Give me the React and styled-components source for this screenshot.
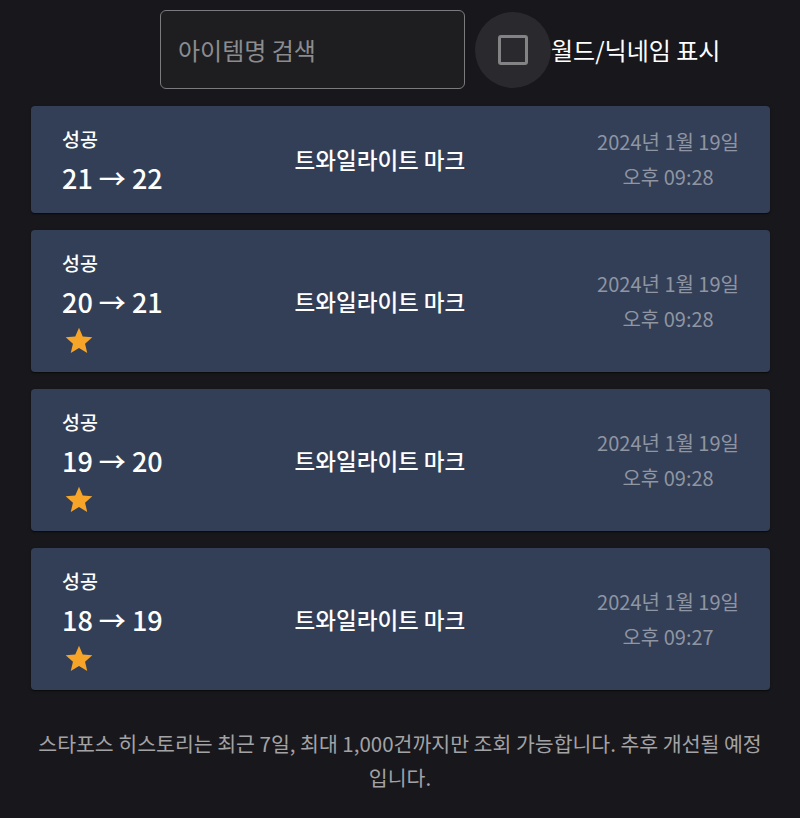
import React from "react";
import styled, { createGlobalStyle } from "styled-components";

const GlobalStyle = createGlobalStyle`
    html, body {
        margin: 0;
        padding: 0;
        background: #18181c;
    }

    body {
        font-family: "Noto Sans CJK KR", "Noto Sans", sans-serif;
        color: #ffffff;
    }
`;

const Page = styled.div`
    width: 800px;
    min-height: 818px;
    background: #18181c;
    padding-top: 10px;
    box-sizing: border-box;
`;

const Toolbar = styled.div`
    display: flex;
    align-items: center;
    height: 79px;
    padding-left: 160px;
`;

const SearchBox = styled.input`
    box-sizing: border-box;
    width: 305px;
    height: 79px;
    padding: 0 17px;
    background: #1e1e21;
    border: 1px solid #7b7b7e;
    border-radius: 6px;
    color: #ffffff;
    font-family: inherit;
    font-size: 24px;
    outline: none;

    &::placeholder {
        color: #8c8c8f;
    }
`;

const ToggleLabel = styled.label`
    display: flex;
    align-items: center;
    margin-left: 10px;
    font-size: 24px;
    font-weight: 400;
    color: #ffffff;
    cursor: pointer;
`;

const Ripple = styled.span`
    display: flex;
    align-items: center;
    justify-content: center;
    width: 76px;
    height: 76px;
    border-radius: 50%;
    background: #2a2a2e;
`;

const Box = styled.span`
    box-sizing: border-box;
    width: 30px;
    height: 30px;
    border: 3px solid #838386;
    border-radius: 3px;
`;

const List = styled.ul`
    list-style: none;
    margin: 17px 30px 0 31px;
    padding: 0;
    display: flex;
    flex-direction: column;
    gap: 17px;
`;

const Card = styled.li`
    display: flex;
    align-items: center;
    justify-content: space-between;
    padding: 14px 31px 15px;
    background: #333f56;
    border-radius: 4px;
    box-shadow: 0 2px 1px -1px rgba(0, 0, 0, 0.3), 0 1px 1px 0 rgba(0, 0, 0, 0.2),
        0 1px 3px 0 rgba(0, 0, 0, 0.18);
`;

const Result = styled.div`
    display: flex;
    flex-direction: column;
`;

const Status = styled.div`
    font-size: 19.5px;
    font-weight: 500;
    line-height: 38px;
`;

const Levels = styled.div`
    font-size: 27px;
    font-weight: 500;
    line-height: 40px;
`;

const StarIcon = styled.svg`
    display: block;
    width: 32px;
    height: 32px;
    margin: 3px 0 0 1px;
    fill: #f6a528;
`;

const ItemName = styled.div`
    font-size: 22.5px;
    font-weight: 500;
    line-height: 30px;
`;

const DateTime = styled.div`
    font-size: 20px;
    line-height: 35px;
    text-align: center;
    color: #8f95a2;
`;

const Notice = styled.p`
    margin: 36px 0 0;
    padding: 0 38px;
    font-size: 20.5px;
    line-height: 34px;
    text-align: center;
    color: #a3a3a6;
`;

const Star = () => (
    <StarIcon viewBox="0 0 24 24">
        <path d="M12 17.27 18.18 21l-1.64-7.03L22 9.24l-7.19-.61L12 2 9.19 8.63 2 9.24l5.46 4.73L5.82 21z" />
    </StarIcon>
);

const history = [
    { from: 21, to: 22, star: false, time: "오후 09:28" },
    { from: 20, to: 21, star: true, time: "오후 09:28" },
    { from: 19, to: 20, star: true, time: "오후 09:28" },
    { from: 18, to: 19, star: true, time: "오후 09:27" },
];

export default function App() {
    return (
        <>
            <GlobalStyle />
            <Page>
                <Toolbar>
                    <SearchBox placeholder="아이템명 검색" />
                    <ToggleLabel>
                        <Ripple>
                            <Box />
                        </Ripple>
                        월드/닉네임 표시
                    </ToggleLabel>
                </Toolbar>
                <List>
                    {history.map((row) => (
                        <Card key={row.from}>
                            <Result>
                                <Status>성공</Status>
                                <Levels>
                                    {row.from} → {row.to}
                                </Levels>
                                {row.star && <Star />}
                            </Result>
                            <ItemName>트와일라이트 마크</ItemName>
                            <DateTime>
                                2024년 1월 19일
                                <br />
                                {row.time}
                            </DateTime>
                        </Card>
                    ))}
                </List>
                <Notice>
                    스타포스 히스토리는 최근 7일, 최대 1,000건까지만 조회 가능합니다. 추후 개선될
                    예정입니다.
                </Notice>
            </Page>
        </>
    );
}
